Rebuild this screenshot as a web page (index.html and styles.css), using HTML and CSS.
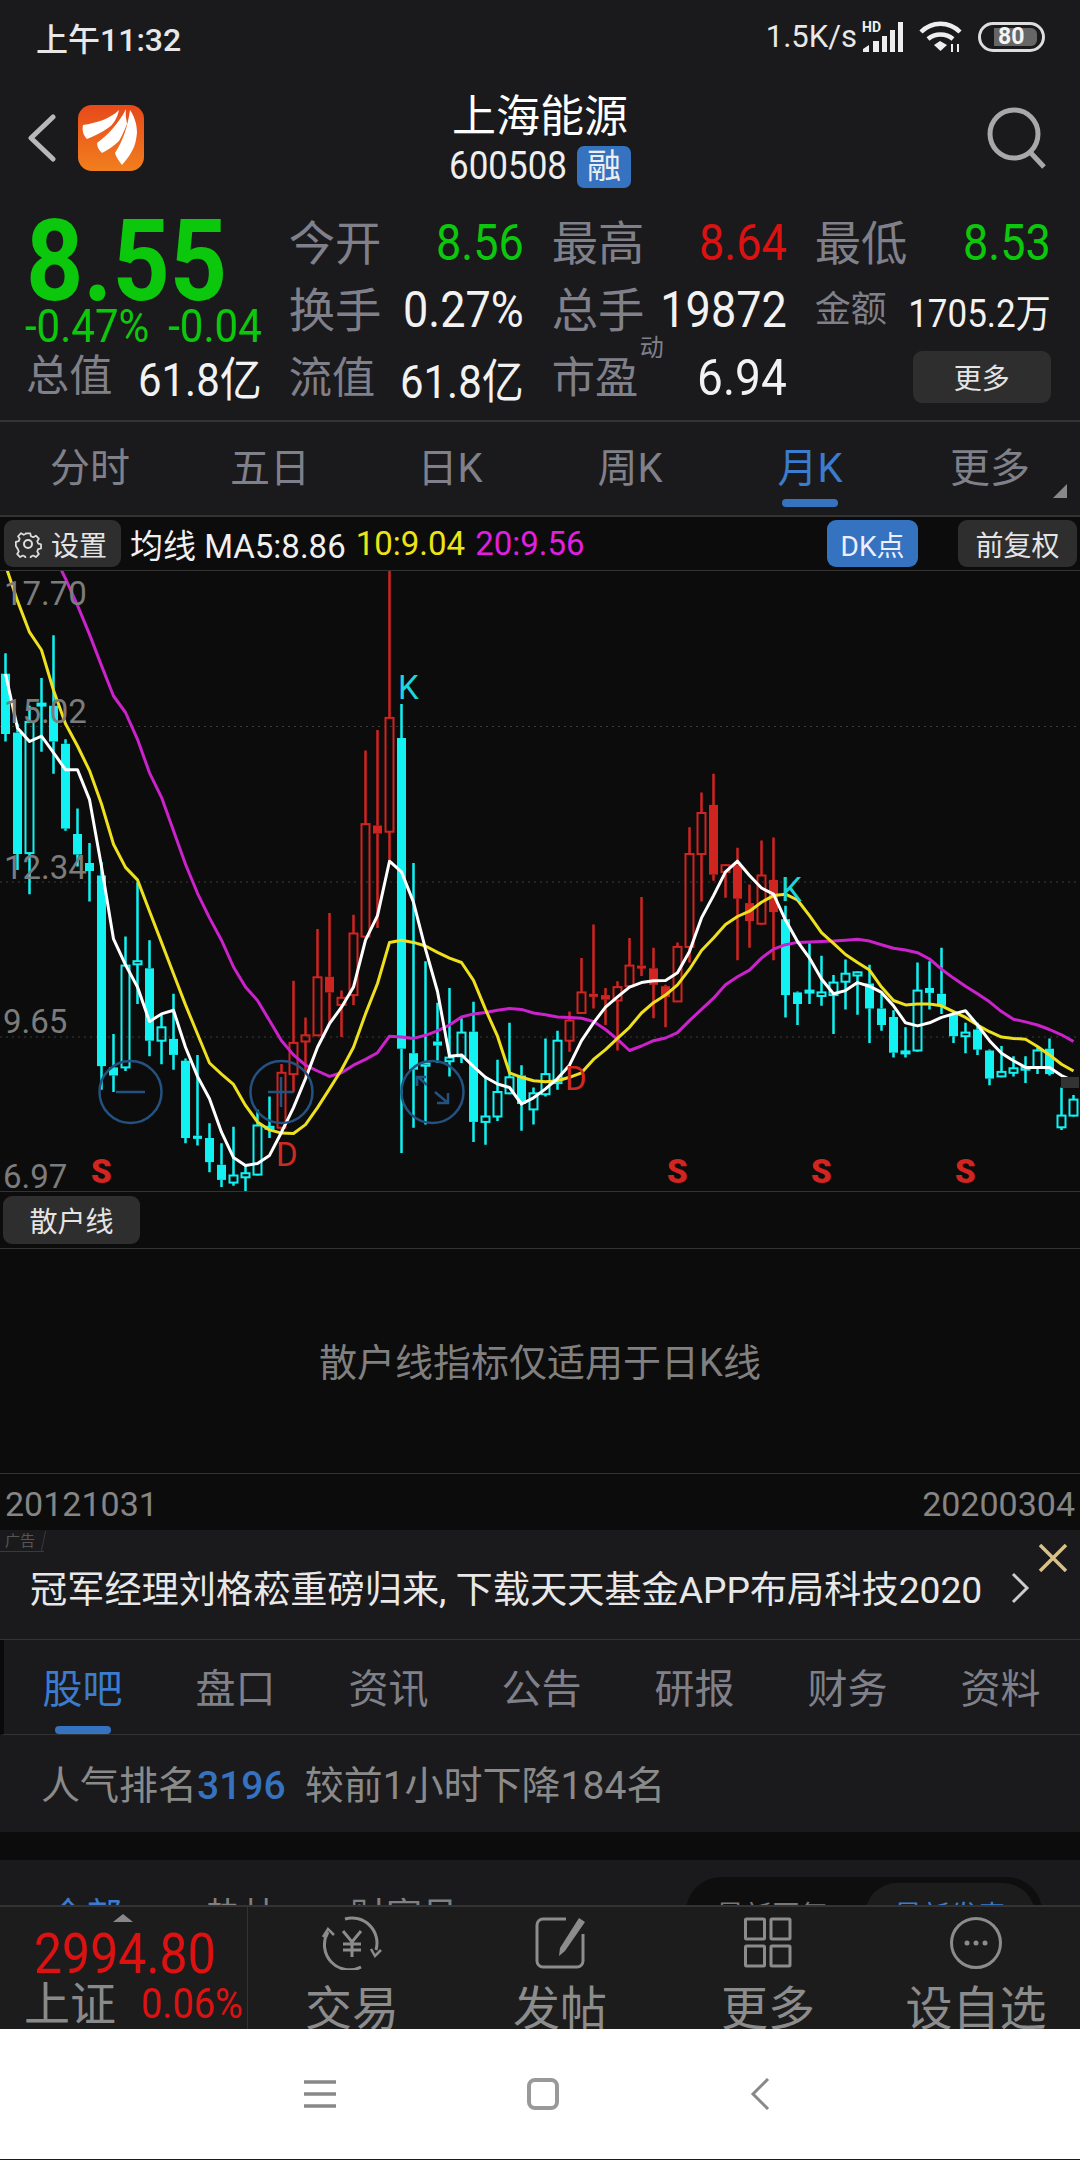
FILE: index.html
```html
<!DOCTYPE html>
<html lang="zh-CN">
<head>
  <meta charset="UTF-8" />
  <meta name="viewport" content="width=device-width, initial-scale=1.0"/>
  <title>上海能源 600508</title>
  <link rel="stylesheet" href="styles.css">
</head>
<body>

  <div class="statusbar">
    <span class="clock">上午11:32</span>
    <div class="status-right">
      <span class="speed">1.5K/s</span>
      <svg class="signal" width="42" height="34" viewBox="0 0 42 34">
        <text x="0" y="13" class="hd">HD</text>
        <path d="M1 33v-3l6-4v7zM11 33V22h6v11zM20 33V17h5v16zM28 33V11h5v22zM36 33V3h5v30z" fill="#eee"/>
      </svg>
      <svg class="wifi" width="43" height="32" viewBox="0 0 43 32" fill="none" stroke="#eee" stroke-width="4.500">
        <path d="M2 11C13 0 30 0 41 11M9 18c7-6 18-6 25 0"/>
        <path d="M15 24l6-4 7 4-6.500 6z" fill="#eee" stroke="none"/>
        <path d="M33 23v8M39 23v8" stroke-width="2"/>
      </svg>
      <div class="battery"><div class="battery-fill"></div><span>80</span></div>
    </div>
  </div>

  <header class="topbar">
    <div class="top-left">
      <svg width="28" height="48" viewBox="0 0 28 48" fill="none" stroke="#b8b8b8" stroke-width="5" stroke-linecap="round" stroke-linejoin="round"><path d="M25 3L3 24l22 21"/></svg>
      <svg class="logo" width="66" height="66" viewBox="0 0 66 66">
        <defs>
          <linearGradient id="logoBg" x1="0" y1="0" x2="0" y2="1">
            <stop offset="0" stop-color="#e8491a"/>
            <stop offset="1" stop-color="#f17f1e"/>
          </linearGradient>
        </defs>
        <rect width="66" height="66" rx="14" fill="url(#logoBg)"/>
        <path d="M5 20C18 18 32 14 41 5 39 14 35 20 30 23 23 28 16 31 9 34 5 30 4 25 5 20z" fill="#fff"/>
        <path d="M48 4C47 12 49 16 49 19 46 26 44 31 41 36 36 41 30 45 24 48 21 45 19 42 19 38 30 30 41 18 48 4z" fill="#fff"/>
        <path d="M52 5C58 14 59 22 59 28 58 36 57 41 54 46 51 52 47 56 44 60 41 56 38 52 37 48 45 36 50 20 52 5z" fill="#fff"/>
      </svg>
    </div>
    <div class="title">
      <h1>上海能源</h1>
      <div class="code"><span class="tall">600508</span><span class="rong">融</span></div>
    </div>
    <svg class="search" width="62" height="62" viewBox="0 0 62 62" fill="none" stroke="#a8a8a8" stroke-width="5">
      <circle cx="28" cy="27" r="24"/><path d="M44 45l14 15"/>
    </svg>
  </header>

  <section class="quote">
    <div class="price-box">
      <div class="price">8.55</div>
      <div class="change"><span class="tall">-0.47%</span><span class="tall">-0.04</span></div>
      <div class="cell wide"><span class="lab">总值</span><span class="val">61.8亿</span></div>
    </div>
    <div class="stats">
      <div class="cell"><span class="lab">今开</span><span class="val green">8.56</span></div>
      <div class="cell"><span class="lab">最高</span><span class="val red">8.64</span></div>
      <div class="cell"><span class="lab">最低</span><span class="val green">8.53</span></div>
      <div class="cell"><span class="lab">换手</span><span class="val">0.27%</span></div>
      <div class="cell"><span class="lab">总手</span><span class="val">19872</span></div>
      <div class="cell small"><span class="lab">金额</span><span class="val">1705.2万</span></div>
      <div class="cell low"><span class="lab">流值</span><span class="val">61.8亿</span></div>
      <div class="cell low pe"><span class="lab">市盈<sup class="dyn">动</sup></span><span class="val">6.94</span></div>
      <div class="more-wrap"><button class="btn more-btn">更多</button></div>
    </div>
  </section>

  <nav class="period-tabs">
    <a>分时</a><a>五日</a><a>日K</a><a>周K</a><a class="active">月K</a><a class="has-corner">更多</a>
  </nav>

  <div class="ma-bar">
    <button class="btn set-btn">
      <svg width="28" height="28" viewBox="0 0 28 28" fill="none" stroke="#ddd" stroke-width="2" stroke-linejoin="round">
        <circle cx="14" cy="14" r="4"/>
        <path d="M11.500 2h5l.8 3.400 2.600 1.100 3-1.800 3.400 3.500-1.800 2.900 1 2.600 3.300.8v4.800l-3.300.8-1 2.600 1.800 2.900-3.400 3.500-3-1.800-2.600 1.100-.8 3.400h-5l-.8-3.400-2.600-1.100-3 1.800-3.400-3.500 1.800-2.900-1-2.600L.200 16.500v-4.800l3.300-.8 1-2.600-1.800-2.900 3.400-3.500 3 1.800 2.600-1.100z" transform="translate(1.700 1.500) scale(.88)"/>
      </svg>
      设置
    </button>
    <span class="ma-text">均线 MA5:8.86</span>
    <span class="ma-text yellow">10:9.04</span>
    <span class="ma-text magenta">20:9.56</span>
    <button class="btn dk-btn">DK点</button>
    <button class="btn fq-btn">前复权</button>
  </div>

  <div class="chart">
    <svg id="kline" width="1080" height="620" viewBox="0 0 1080 620">
      <g stroke="#3a3a3a" stroke-width="1" stroke-dasharray="2 4">
        <path d="M0 155.500H1080M0 311H1080M0 466H1080"/>
      </g>
      <g id="candles"></g>
      <g id="lines" fill="none" stroke-width="3" stroke-linejoin="round"></g>
      <g fill="none" stroke="#24517f" stroke-width="2.500">
        <ellipse cx="130.500" cy="521" rx="31" ry="31"/>
        <ellipse cx="281.500" cy="521" rx="31" ry="31"/>
        <ellipse cx="432.500" cy="521" rx="31" ry="31"/>
        <path d="M116 521h29M268 521h26M281 506v30"/>
        <path d="M427 514l-9-8M417 515v-9h9M435 521l13 11M437 532h11v-10"/>
      </g>
      <rect x="1061" y="506" width="18" height="11" fill="#333"/>
      <g class="axis">
        <text x="4" y="34">17.70</text>
        <text x="4" y="152">15.02</text>
        <text x="4" y="308">12.34</text>
        <text x="3" y="462">9.65</text>
        <text x="3" y="617">6.97</text>
      </g>
      <g class="mark cyan-t"><text x="398" y="128">K</text><text x="781" y="330">K</text></g>
      <g class="mark red-t"><text x="276" y="595">D</text><text x="565" y="519">D</text></g>
      <g class="sell">
        <text x="91" y="612">S</text><text x="667" y="612">S</text><text x="811" y="612">S</text><text x="955" y="612">S</text>
      </g>
    </svg>
  </div>

  <div class="sub-pane">
    <div class="sub-head"><button class="btn sub-btn">散户线</button></div>
    <div class="sub-msg">散户线指标仅适用于日K线</div>
  </div>

  <div class="dates"><span>20121031</span><span>20200304</span></div>

  <div class="ad">
    <span class="ad-tag">广告</span>
    <span class="ad-text">冠军经理刘格菘重磅归来, 下载天天基金APP布局科技2020</span>
    <svg class="ad-arrow" width="20" height="32" viewBox="0 0 20 32" fill="none" stroke="#ccc" stroke-width="3"><path d="M3 2l14 14L3 30"/></svg>
    <svg class="ad-close" width="30" height="28" viewBox="0 0 30 28" fill="none" stroke="#d8c088" stroke-width="3.500"><path d="M2 1l26 26M28 1L2 27"/></svg>
  </div>

  <nav class="news-tabs">
    <a class="active">股吧</a><a>盘口</a><a>资讯</a><a>公告</a><a>研报</a><a>财务</a><a>资料</a>
  </nav>

  <div class="rank">人气排名<b>3196</b><span>较前1小时下降184名</span></div>

  <div class="gap"></div>

  <div class="feed-head">
    <span class="feed-tab active">全部</span>
    <span class="feed-tab">热帖</span>
    <span class="feed-tab">财富号</span>
    <div class="feed-pill"><span>最新回复</span><span class="on">最新发表</span></div>
  </div>

  <footer class="bottom-bar">
    <div class="index-box">
      <i class="caret"></i>
      <div class="index-num tall">2994.80</div>
      <div class="index-row"><span>上证</span><em class="tall">0.06%</em></div>
    </div>
    <a class="action">
      <svg width="62" height="54" viewBox="0 0 62 54" fill="none" stroke="#8c8c8c" stroke-width="3">
        <path d="M24 3a25 25 0 0 1 31 31"/>
        <path d="M7 16a25 25 0 0 0 33 35"/>
        <path d="M50 33l4 7 6-6M2 21l5-8 6 6" stroke-width="2.500"/>
        <path d="M22 15l9 11 9-11M31 26v15M22 28h18M22 34h18"/>
      </svg>
      交易
    </a>
    <a class="action">
      <svg width="54" height="54" viewBox="0 0 54 54" fill="none" stroke="#8c8c8c" stroke-width="3">
        <path d="M33 3H10a6 6 0 0 0-6 6v36a6 6 0 0 0 6 6h34a6 6 0 0 0 6-6V18"/>
        <path d="M46 2l6 4-20 29-6 5 1-8z" fill="#8c8c8c" stroke="none"/>
      </svg>
      发帖
    </a>
    <a class="action">
      <svg width="54" height="54" viewBox="0 0 54 54" fill="none" stroke="#8c8c8c" stroke-width="3">
        <rect x="4.500" y="3" width="19" height="20" rx="1"/><rect x="30" y="3" width="19" height="20" rx="1"/>
        <rect x="4.500" y="30" width="19" height="20" rx="1"/><rect x="30" y="30" width="19" height="20" rx="1"/>
      </svg>
      更多
    </a>
    <a class="action">
      <svg width="54" height="54" viewBox="0 0 54 54" fill="none" stroke="#8c8c8c" stroke-width="3">
        <circle cx="27" cy="27" r="24.500"/>
        <g fill="#8c8c8c" stroke="none"><circle cx="18" cy="27" r="2.500"/><circle cx="27" cy="27" r="2.500"/><circle cx="36" cy="27" r="2.500"/></g>
      </svg>
      设自选
    </a>
  </footer>

  <div class="navbar">
    <svg width="32" height="28" viewBox="0 0 32 28" fill="none" stroke="#888" stroke-width="3.500"><path d="M0 2h32M0 14h32M0 26h32"/></svg>
    <svg width="32" height="32" viewBox="0 0 32 32" fill="none" stroke="#999" stroke-width="4"><rect x="2" y="2" width="28" height="28" rx="6"/></svg>
    <svg width="20" height="32" viewBox="0 0 20 32" fill="none" stroke="#888" stroke-width="3"><path d="M18 1L3 16l15 15"/></svg>
  </div>

  <script src="chart.js"></script>
</body>
</html>
```

FILE: styles.css
```css
:root {
  --panel: #1a1a1c;
  --chart: #0c0c0c;
  --line: #333333;
  --blue: #3573c0;
  --green: #0cc80c;
  --red: #dc1212;
  --label: #80808a;
}
* {
  box-sizing: border-box;
}
html, body {
  margin: 0;
  background: var(--panel);
}
body {
  width: 1080px;
  height: 2160px;
  overflow: hidden;
  font-family: Roboto, "Noto Sans CJK SC", sans-serif;
  color: #eee;
}
.btn {
  border: none;
  border-radius: 9px;
  background: #2e2e2e;
  color: #e4e4e4;
  font-family: inherit;
  font-size: 28px;
  padding: 0;
}
.tall {
  display: inline-block;
  transform: scaleY(1.1);
}

/* status bar */
.statusbar {
  height: 76px;
  padding: 0 35px 3px 36px;
  display: flex;
  justify-content: space-between;
  align-items: center;
}
.clock {
  font-size: 32px;
  font-weight: 500;
  color: #e8e8e8;
}
.status-right {
  display: flex;
  align-items: center;
}
.speed {
  font-size: 31px;
  color: #e8e8e8;
}
.signal {
  margin-left: 5px;
  margin-top: -2px;
}
.hd {
  font-size: 14px;
  font-weight: 700;
  fill: #eee;
}
.wifi {
  margin-left: 15px;
}
.battery {
  position: relative;
  margin-left: 16px;
  width: 67px;
  height: 30px;
  border: 3px solid #ddd;
  border-radius: 15px;
  padding: 3px 5px 3px 13px;
}
.battery-fill {
  height: 100%;
  background: #666;
  border-radius: 0 6px 6px 0;
}
.battery span {
  position: absolute;
  left: 17px;
  top: 0;
  line-height: 24px;
  font-size: 23px;
  font-weight: 700;
  color: #f4f4f4;
}

/* header */
.topbar {
  position: relative;
  height: 126px;
  display: flex;
  justify-content: center;
  align-items: center;
}
.top-left {
  position: absolute;
  left: 28px;
  top: 29px;
  display: flex;
  align-items: center;
  gap: 22px;
}
.title {
  text-align: center;
}
.title h1 {
  margin: 0;
  font-size: 44px;
  font-weight: 400;
  line-height: 54px;
  color: #fff;
}
.code {
  margin-top: 2px;
  font-size: 35px;
  line-height: 42px;
  display: flex;
  align-items: center;
  justify-content: center;
}
.rong {
  margin-left: 10px;
  width: 54px;
  height: 42px;
  background: var(--blue);
  border-radius: 7px;
  font-size: 34px;
  line-height: 40px;
  text-align: center;
}
.search {
  position: absolute;
  right: 32px;
  top: 31px;
}

/* quote block */
.quote {
  height: 220px;
  padding: 8px 28px 0 25px;
  display: flex;
  border-bottom: 2px solid var(--line);
}
.price-box {
  width: 237px;
}
.price {
  margin-top: 10px;
  font-size: 100px;
  font-weight: 700;
  line-height: 84px;
  color: var(--green);
  padding-left: 1px;
  transform: scaleY(1.13);
}
.change {
  display: flex;
  justify-content: space-between;
  font-size: 42px;
  line-height: 46px;
  color: var(--green);
}
.stats {
  margin-left: 27px;
  width: 764px;
  display: grid;
  grid-template-columns: 235px 235px 236px;
  column-gap: 28px;
  grid-template-rows: 64px 70px 66px;
}
.cell {
  display: flex;
  justify-content: space-between;
  align-items: center;
  font-size: 45px;
}
.cell.wide {
  font-size: 42px;
  height: 50px;
  margin-top: 0;
  padding-left: 1px;
}
.lab {
  color: var(--label);
  position: relative;
  top: -3px;
  font-size: 1.03em;
}
.cell.small {
  font-size: 35px;
}
.val {
  display: inline-block;
  transform: scaleY(1.1);
  color: #f2f2f2;
}
.cell.low {
  font-size: 42px;
}
.cell.pe .val {
  font-size: 46px;
}
.val.green {
  color: var(--green);
}
.val.red {
  color: var(--red);
}
.dyn {
  position: absolute;
  left: 88px;
  top: -10px;
  font-size: 24px;
  line-height: 30px;
  vertical-align: baseline;
}
.more-wrap {
  display: flex;
  justify-content: flex-end;
  align-items: center;
}
.more-btn {
  width: 138px;
  height: 52px;
}

/* period tabs */
.period-tabs {
  height: 95px;
  display: grid;
  grid-template-columns: repeat(6, 180px);
  border-bottom: 2px solid var(--line);
}
.period-tabs a, .news-tabs a {
  position: relative;
  text-align: center;
  font-size: 40px;
  color: var(--label);
}
.period-tabs a {
  line-height: 94px;
}
.period-tabs .active, .news-tabs .active {
  color: #3b7cce;
}
.period-tabs .active::after, .news-tabs .active::after {
  content: "";
  position: absolute;
  bottom: 9px;
  left: 50%;
  width: 56px;
  height: 8px;
  margin-left: -28px;
  border-radius: 4px;
  background: var(--blue);
}
.has-corner::after {
  content: "";
  position: absolute;
  right: 13px;
  bottom: 18px;
  border-left: 14px solid transparent;
  border-bottom: 14px solid #888;
}

/* ma bar */
.ma-bar {
  height: 54px;
  background: var(--chart);
  border-bottom: 1px solid var(--line);
  padding: 3px 3px 3px 4px;
  display: flex;
  align-items: center;
}
.ma-bar .btn {
  height: 47px;
}
.set-btn {
  width: 117px;
  display: flex;
  align-items: center;
  gap: 9px;
  padding-left: 10px;
}
.ma-text {
  font-size: 33px;
  margin-left: 10px;
  white-space: nowrap;
  color: #f0f0f0;
}
.ma-text:first-of-type {
  margin-left: 9px;
}
.yellow {
  color: #ece415;
}
.magenta {
  color: #e01fe0;
}
.dk-btn {
  margin-left: auto;
  width: 91px;
  background: var(--blue);
  color: #eef;
}
.fq-btn {
  margin-left: 40px;
  width: 119px;
}

/* chart */
.chart {
  height: 621px;
  background: var(--chart);
  border-bottom: 1px solid var(--line);
}
#kline {
  display: block;
}
.axis text {
  font-size: 33px;
  fill: #7c7c7c;
}
.mark text {
  font-size: 33px;
}
.cyan-t {
  fill: #1dd5dc;
}
.red-t {
  fill: #cf2a22;
}
.sell text {
  font-size: 33px;
  font-weight: 900;
  fill: #d22420;
}

/* sub pane */
.sub-pane {
  height: 282px;
  background: var(--chart);
  border-bottom: 1px solid var(--line);
}
.sub-head {
  height: 57px;
  padding: 4px 0 0 3px;
  border-bottom: 1px solid var(--line);
}
.sub-btn {
  width: 137px;
  height: 48px;
}
.sub-msg {
  text-align: center;
  font-size: 38px;
  line-height: 54px;
  margin-top: 87px;
  color: #808080;
}
.dates {
  height: 56px;
  padding: 3px 5px 0;
  background: var(--chart);
  display: flex;
  justify-content: space-between;
  align-items: center;
  font-size: 34px;
  color: #858585;
}

/* ad */
.ad {
  position: relative;
  height: 110px;
  padding: 5px 0 0 30px;
  border-bottom: 1px solid var(--line);
  display: flex;
  align-items: center;
}
.ad-tag {
  position: absolute;
  left: 0;
  top: 1px;
  width: 44px;
  padding-left: 5px;
  font-size: 15px;
  line-height: 20px;
  color: #555;
  border-bottom: 1px solid #3a3a3a;
}
.ad-tag::after {
  content: "";
  position: absolute;
  right: 0;
  top: 0;
  height: 20px;
  border-right: 1px solid #3a3a3a;
  transform: skewX(-12deg);
}
.ad-text {
  font-size: 37.200px;
  white-space: nowrap;
  color: #e8e8e8;
}
.ad-arrow {
  position: absolute;
  left: 1010px;
  top: 42px;
}
.ad-close {
  position: absolute;
  left: 1038px;
  top: 14px;
}

/* news tabs */
.news-tabs {
  height: 95px;
  padding: 0 3px 0 2px;
  display: grid;
  grid-template-columns: repeat(7, 153px);
  border-left: 4px solid #0a0a0a;
  border-bottom: 1px solid var(--line);
}
.news-tabs a {
  line-height: 100px;
}
.news-tabs .active::after {
  bottom: 6px;
}

.rank {
  height: 97px;
  padding-left: 41px;
  font-size: 39px;
  line-height: 102px;
  color: #8a8a8a;
}
.rank b {
  color: var(--blue);
  font-weight: 500;
}
.rank span {
  margin-left: 19px;
}
.gap {
  height: 28px;
  background: var(--chart);
}

/* feed head, mostly hidden by the bottom bar */
.feed-head {
  position: relative;
  height: 45px;
  overflow: hidden;
}
.feed-tab {
  position: absolute;
  top: 32px;
  font-size: 36px;
  line-height: 50px;
  color: #808080;
}
.feed-tab.active {
  left: 50px;
  color: #3b7cce;
}
.feed-tab:nth-child(2) {
  left: 206px;
}
.feed-tab:nth-child(3) {
  left: 350px;
}
.feed-pill {
  position: absolute;
  left: 686px;
  top: 17px;
  width: 356px;
  height: 70px;
  padding: 6px 7px 0 30px;
  display: flex;
  justify-content: space-between;
  background: #0e0e0e;
  border-radius: 35px;
  font-size: 28px;
  color: #777;
}
.feed-pill span {
  line-height: 68px;
}
.feed-pill .on {
  width: 170px;
  height: 64px;
  text-align: center;
  border-radius: 32px;
  background: #1c1c1c;
  color: #3b7cce;
}

/* bottom bar */
.bottom-bar {
  height: 124px;
  background: #1c1c1c;
  border-top: 2px solid var(--line);
  display: flex;
  overflow: hidden;
}
.index-box {
  position: relative;
  width: 249px;
  border-right: 1px solid var(--line);
  padding-left: 24px;
}
.caret {
  position: absolute;
  left: 113px;
  top: 7px;
  border-left: 10px solid transparent;
  border-right: 10px solid transparent;
  border-bottom: 8px solid #888;
}
.index-num {
  margin: 19px 0 0 10px;
  font-size: 50px;
  line-height: 56px;
  color: var(--red);
}
.index-row {
  display: flex;
  align-items: center;
  font-size: 46px;
  line-height: 48px;
  margin-top: -2px;
  color: #8a8a8a;
}
.index-row em {
  font-style: normal;
  font-size: 38px;
  margin-left: 25px;
  color: var(--red);
}
.action {
  width: 208px;
  flex: none;
  padding-top: 9px;
  display: flex;
  flex-direction: column;
  align-items: center;
  font-size: 47px;
  line-height: 78px;
  color: #8c8c8c;
}
.action svg {
  display: block;
  flex: none;
}

/* android nav */
.navbar {
  height: 130px;
  background: #fff;
  display: flex;
  align-items: center;
  justify-content: center;
  gap: 191px;
  padding-right: 6px;
}
```

FILE: chart.js
```js
// values below were read off a 2.24x tall capture of the chart, toY() brings them back to svg pixels
// bars: [color, filled, wickTop, bodyTop, bodyBottom, wickBottom]
const BARS = [
  ["c",1,322,368,503,520],["c",1,480,500,772,808],["c",0,440,476,770,862],["c",0,378,435,437,543],
  ["c",1,282,440,520,592],["c",1,515,525,715,720],["c",1,670,727,773,800],["c",1,747,792,810,878],
  ["c",1,790,820,1247,1300],["c",1,1175,1250,1268,1305],["c",0,957,1022,1250,1258],["c",0,835,1012,1019,1108],
  ["c",1,965,1028,1190,1225],["c",0,1130,1160,1190,1243],["c",1,1085,1186,1222,1255],["c",1,1230,1235,1408,1420],
  ["c",1,1222,1403,1410,1425],["c",1,1375,1408,1462,1485],["c",1,1420,1468,1502,1518],["c",0,1383,1492,1508,1515],
  ["c",0,1470,1487,1496,1528],["c",0,1345,1380,1490,1492],["c",0,1315,1383,1387,1408],["r",0,1242,1262,1385,1390],
  ["r",0,1056,1195,1265,1305],["r",0,1138,1178,1192,1270],["r",0,940,1048,1178,1180],["r",1,904,1047,1082,1150],
  ["r",0,1078,1094,1110,1182],["r",0,908,950,1088,1110],["r",0,540,705,957,960],["r",1,494,708,726,938],
  ["r",0,138,467,722,790],["c",1,436,512,1208,1442],["c",1,792,1218,1255,1385],["c",0,1012,1241,1246,1378],
  ["c",1,1105,1192,1201,1240],["c",0,1072,1228,1236,1270],["c",0,1140,1172,1225,1240],["c",1,1103,1170,1372,1417],
  ["c",0,1270,1360,1372,1423],["c",0,1233,1305,1360,1370],["c",0,1150,1272,1308,1310],["c",1,1245,1268,1332,1392],
  ["c",0,1295,1308,1344,1378],["c",0,1185,1265,1310,1315],["c",0,1168,1190,1285,1300],["r",0,1125,1145,1190,1215],
  ["r",0,1005,1082,1128,1130],["r",1,930,1085,1092,1118],["r",1,1072,1088,1098,1155],["r",0,1057,1070,1100,1212],
  ["r",0,960,1022,1068,1070],["r",1,868,1022,1027,1045],["r",1,982,1028,1065,1140],["r",1,1065,1068,1092,1160],
  ["r",0,970,980,1102,1103],["r",0,712,772,980,1015],["r",0,634,680,772,878],["r",1,592,662,818,832],
  ["r",0,795,797,812,870],["r",1,758,795,872,1010],["r",1,840,882,922,982],["r",0,742,820,928,930],
  ["r",1,735,830,902,1010],["c",1,888,918,1088,1138],["c",1,1080,1082,1108,1155],["c",0,972,1078,1082,1108],
  ["c",0,1000,1082,1090,1112],["c",0,1043,1060,1088,1175],["c",0,1008,1040,1058,1120],["c",0,1035,1037,1044,1132],
  ["c",1,1020,1062,1118,1195],["c",1,1085,1118,1155,1168],["c",1,1122,1137,1217,1228],["c",0,1160,1214,1218,1228],
  ["c",0,1015,1078,1212,1215],["c",1,1012,1072,1083,1120],["c",1,982,1085,1112,1130],["c",1,1125,1130,1180,1195],
  ["c",0,1150,1172,1180,1218],["c",1,1150,1165,1210,1222],["c",1,1210,1212,1275,1290],["c",0,1202,1260,1270,1272],
  ["c",0,1225,1252,1262,1270],["c",0,1225,1250,1255,1285],["c",0,1205,1212,1250,1265],["c",1,1185,1208,1265,1268],
  ["c",0,1295,1358,1384,1390],["c",0,1312,1322,1358,1360]
];

const MA5 = [368,490,520,508,545,583,583,650,800,962,1020,1070,1147,1130,1122,1205,1270,1320,1395,1452,1470,1465,1447,1395,1340,1275,1205,1152,1115,1070,965,910,788,812,880,985,1080,1225,1222,1248,1272,1287,1295,1332,1318,
  1298,1275,1245,1190,1150,1115,1092,1070,1060,1056,1055,1038,990,915,865,812,788,820,848,862,920,968,1005,1052,1085,1078,1060,1068,1082,1112,1150,1157,1150,1138,1130,1123,1155,1190,1218,1235,1250,1250,1250,1268,1280];
const MA10 = [125,205,275,315,405,480,530,585,660,750,802,830,900,970,1040,1110,1175,1240,1265,1288,1335,1372,1390,1397,1398,1378,1340,1298,1255,1205,1130,1062,970,965,970,978,992,1005,1015,1055,1120,1180,1262,1272,1280,
  1282,1280,1272,1262,1232,1210,1185,1160,1128,1105,1088,1065,1030,988,960,930,912,900,880,865,862,875,910,948,972,997,1015,1032,1070,1100,1110,1108,1108,1112,1125,1138,1155,1170,1182,1185,1187,1203,1222,1243,1258];
const MA20 = [null,null,null,null,100,155,215,280,350,418,455,515,590,645,720,795,860,915,965,1025,1070,1100,1145,1190,1222,1245,1258,1270,1262,1245,1232,1217,1180,1182,1185,1178,1168,1155,1137,1130,1127,1122,1118,1120,1128,
  1132,1137,1138,1140,1147,1165,1187,1212,1202,1190,1184,1172,1145,1120,1095,1065,1047,1032,1005,985,975,970,969,968,967,965,963,967,975,983,987,993,1007,1030,1050,1068,1085,1103,1125,1142,1148,1155,1165,1177,1192];

const NS = "http://www.w3.org/2000/svg";
const COLORS = { c: "#12f2f2", r: "#cf2420" };

function barX(i) {
  return 5.5 + i * 12;
}

function toY(v) {
  return Math.round((v / 2.24 - 61.6) * 10) / 10;
}

function add(parent, tag, attrs) {
  const el = document.createElementNS(NS, tag);
  for (const k in attrs) el.setAttribute(k, attrs[k]);
  parent.appendChild(el);
}

function drawCandles() {
  const g = document.getElementById("candles");
  BARS.forEach((b, i) => {
    const [col, filled] = b;
    const [wt, bt, bb, wb] = b.slice(2).map(toY);
    const x = barX(i);
    const color = COLORS[col];
    add(g, "path", { d: `M${x} ${wt}V${bt}M${x} ${bb}V${wb}`, stroke: color, "stroke-width": 2.5 });
    if (filled) {
      add(g, "rect", { x: x - 4.5, y: bt, width: 9, height: Math.max(bb - bt, 3), fill: color });
    } else {
      add(g, "rect", { x: x - 4, y: bt, width: 8, height: Math.max(bb - bt, 2), fill: "none", stroke: color, "stroke-width": 2 });
    }
  });
}

function drawLine(values, color) {
  const pts = [];
  values.forEach((v, i) => {
    if (v !== null) pts.push(barX(i) + "," + toY(v));
  });
  add(document.getElementById("lines"), "polyline", { points: pts.join(" "), stroke: color });
}

drawCandles();
drawLine(MA20, "#cc22cc");
drawLine(MA10, "#eee01e");
drawLine(MA5, "#ffffff");
```
